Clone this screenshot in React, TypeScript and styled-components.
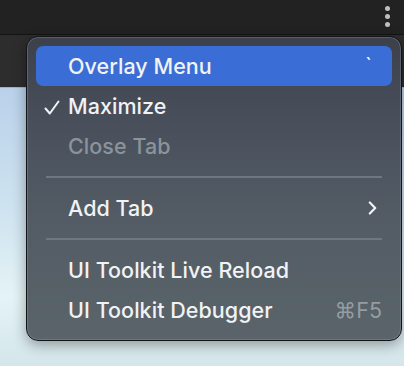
import React from 'react';
import styled, { createGlobalStyle } from 'styled-components';

type MenuEntry =
  | { kind: 'item'; label: string; checked?: boolean; disabled?: boolean; active?: boolean; shortcut?: string; submenu?: boolean }
  | { kind: 'separator' };

const entries: MenuEntry[] = [
  { kind: 'item', label: 'Overlay Menu', active: true, shortcut: '`' },
  { kind: 'item', label: 'Maximize', checked: true },
  { kind: 'item', label: 'Close Tab', disabled: true },
  { kind: 'separator' },
  { kind: 'item', label: 'Add Tab', submenu: true },
  { kind: 'separator' },
  { kind: 'item', label: 'UI Toolkit Live Reload' },
  { kind: 'item', label: 'UI Toolkit Debugger', shortcut: '⌘F5' },
];

const CheckIcon: React.FC = () => (
  <svg width="16" height="15" viewBox="0 0 16 15" fill="none">
    <path d="M1.5 8.5 L5.8 13.5 L14.5 1.5" stroke="#f2f3f5" strokeWidth="2" strokeLinecap="round" strokeLinejoin="round" />
  </svg>
);

const ChevronIcon: React.FC = () => (
  <svg width="9" height="14" viewBox="0 0 9 14" fill="none">
    <path d="M1.8 1.5 L7.2 7 L1.8 12.5" stroke="#f2f3f5" strokeWidth="2.2" strokeLinecap="round" strokeLinejoin="round" />
  </svg>
);

const App: React.FC = () => {
  return (
    <>
      <GlobalStyle />
      <StyledWindow>
        <StyledToolbar>
          <StyledKebab>
            <span />
            <span />
            <span />
          </StyledKebab>
        </StyledToolbar>
        <StyledTabStrip />
        <StyledContent />

        <StyledMenu>
          {entries.map((e, i) =>
            e.kind === 'separator' ? (
              <StyledSeparator key={i} />
            ) : (
              <StyledItem key={i} $active={e.active} $disabled={e.disabled}>
                <StyledCheckSlot>{e.checked && <CheckIcon />}</StyledCheckSlot>
                <StyledLabel>{e.label}</StyledLabel>
                {e.shortcut && <StyledShortcut $plain={e.active}>{e.shortcut}</StyledShortcut>}
                {e.submenu && (
                  <StyledArrow>
                    <ChevronIcon />
                  </StyledArrow>
                )}
              </StyledItem>
            ),
          )}
        </StyledMenu>
      </StyledWindow>
    </>
  );
};

const GlobalStyle = createGlobalStyle`
  html, body {
    margin: 0;
    padding: 0;
    background: #222222;
  }
  * {
    box-sizing: border-box;
  }
`;

const StyledWindow = styled.div`
  position: relative;
  width: 404px;
  height: 366px;
  overflow: hidden;
  display: flex;
  flex-direction: column;
  font-family: Inter, 'Noto Sans', 'Liberation Sans', sans-serif;
`;

const StyledToolbar = styled.div`
  height: 35px;
  flex: none;
  background: #222222;
  border-bottom: 1px solid #141414;
  display: flex;
  justify-content: flex-end;
  align-items: center;
  padding-right: 14px;
`;

const StyledKebab = styled.div`
  display: flex;
  flex-direction: column;
  gap: 3px;
  margin-top: -1px;
  span {
    width: 5px;
    height: 5px;
    border-radius: 50%;
    background: #bfbfbf;
  }
`;

const StyledTabStrip = styled.div`
  height: 53px;
  flex: none;
  background: #2d2d2d;
  border-bottom: 1px solid #9fb4c8;
`;

const StyledContent = styled.div`
  flex: 1;
  background: linear-gradient(180deg, #b9d1ea 0%, #cfe4f0 45%, #e4f3f6 75%, #d4e6ea 100%);
`;

const StyledMenu = styled.div`
  position: absolute;
  left: 26px;
  top: 36px;
  width: 376px;
  padding: 9px 9px 10px 9px;
  border-radius: 12px;
  border: 1px solid #121418;
  background: linear-gradient(180deg, #3c404b 0%, #474e5a 25%, #535c65 60%, #5a646a 100%);
  box-shadow: inset 0 0 0 1px rgba(150, 156, 168, 0.35), 0 4px 14px rgba(0, 0, 0, 0.35);
  display: flex;
  flex-direction: column;
`;

const StyledItem = styled.div<{ $active?: boolean; $disabled?: boolean }>`
  height: 40px;
  display: flex;
  align-items: center;
  padding-right: 10px;
  border-radius: 7px;
  background: ${(p) => (p.$active ? '#3a6dd5' : 'transparent')};
  color: ${(p) => (p.$disabled ? '#8b939b' : '#f1f2f4')};
  font-size: 21.5px;
  font-weight: 500;
  letter-spacing: 0.05px;
`;

const StyledCheckSlot = styled.div`
  width: 32px;
  flex: none;
  display: flex;
  justify-content: center;
  align-items: center;
  padding-top: 2px;
`;

const StyledLabel = styled.span`
  flex: 1;
  white-space: nowrap;
`;

const StyledShortcut = styled.span<{ $plain?: boolean }>`
  color: ${(p) => (p.$plain ? '#f1f2f4' : '#959da3')};
  font-weight: 400;
  padding-right: ${(p) => (p.$plain ? '10px' : '0')};
  align-self: ${(p) => (p.$plain ? 'flex-start' : 'center')};
  padding-top: ${(p) => (p.$plain ? '6px' : '0')};
`;

const StyledArrow = styled.span`
  display: flex;
  align-items: center;
  padding-right: 5px;
`;

const StyledSeparator = styled.div`
  height: 22px;
  flex: none;
  margin: 0 10px;
  display: flex;
  align-items: center;
  &::after {
    content: '';
    flex: 1;
    height: 2px;
    background: #6f7880;
  }
`;

export default App;
